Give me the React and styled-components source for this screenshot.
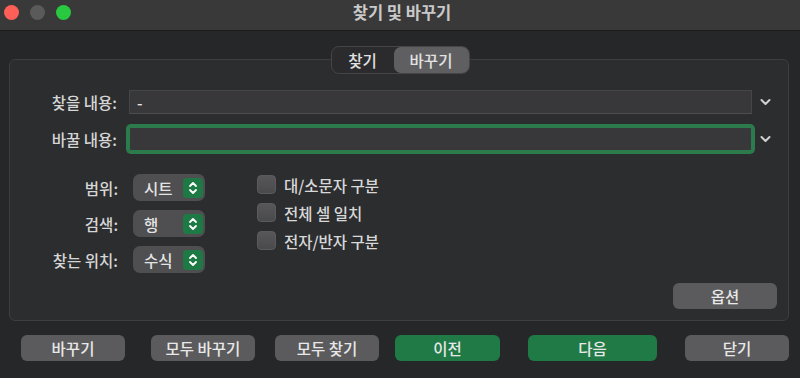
import React from "react";
import styled, { createGlobalStyle } from "styled-components";

const Global = createGlobalStyle`
  html, body { margin: 0; padding: 0; background: #262729; }
  body { font-family: "Noto Sans CJK KR", "Noto Sans", sans-serif; -webkit-font-smoothing: antialiased; }
  * { box-sizing: border-box; }
`;

const Window = styled.div`
  width: 800px;
  height: 378px;
  background: #262729;
  display: flex;
  flex-direction: column;
  overflow: hidden;
  color: #dcdcdc;
  font-size: 15.5px;
  font-weight: 500;
`;

const TitleBar = styled.div`
  height: 31px;
  flex: none;
  background: #393939;
  border-bottom: 1px solid #1b1b1b;
  display: grid;
  grid-template-columns: 1fr auto 1fr;
  align-items: center;
  padding: 0 0 0 4px;
`;

const Lights = styled.div`
  display: flex;
  gap: 11px;
  align-items: center;
  margin-top: -5px;
`;

const Light = styled.span`
  width: 15px;
  height: 15px;
  border-radius: 50%;
  background: ${(p) => p.$c};
`;

const Title = styled.div`
  font-size: 16.5px;
  font-weight: 700;
  color: #c9c9c9;
  margin-top: -6px;
`;

const Body = styled.div`
  flex: 1;
  display: flex;
  flex-direction: column;
  padding: 0 11px 0 9px;
`;

const TabsRow = styled.div`
  display: flex;
  justify-content: center;
  margin-top: 15px;
  position: relative;
  z-index: 1;
  padding-left: 2px;
`;

const Segmented = styled.div`
  display: flex;
  height: 28px;
  background: #2b2b2d;
  border: 1px solid #454547;
  border-radius: 8px;
`;

const Segment = styled.div`
  width: ${(p) => p.$w}px;
  display: flex;
  align-items: center;
  justify-content: center;
  border-radius: 7px;
  color: #e2e2e2;
  background: ${(p) => (p.$active ? "#5f5f61" : "transparent")};
  padding-bottom: 1px;
`;

const Panel = styled.div`
  margin-top: -15px;
  height: 262px;
  background: #2c2d2f;
  border: 1px solid #3d3e40;
  border-radius: 6px;
  display: flex;
  flex-direction: column;
  padding: 30px 11px 11px 0;
`;

const FieldGrid = styled.div`
  display: grid;
  grid-template-columns: 119px 623px 28px;
  row-gap: 13px;
  align-items: center;
`;

const Label = styled.div`
  text-align: right;
  padding-right: 12px;
  color: #d6d6d6;
  white-space: nowrap;
  line-height: 24px;
`;

const Input = styled.div`
  height: 24px;
  background: #38383a;
  border: 1px solid #454547;
  border-bottom-color: #4e4e50;
  display: flex;
  align-items: center;
  padding-left: 7px;
  color: #e6e6e6;
  ${(p) =>
    p.$focus &&
    `
    border: 1px solid #2c7b4c;
    box-shadow: 0 0 0 3px #2c7b4c;
    border-radius: 2px;
  `}
`;

const Chevron = styled.div`
  display: flex;
  padding-left: 8px;
`;

const OptionsArea = styled.div`
  display: flex;
  margin-top: 23px;
  align-items: flex-start;
`;

const PopupGrid = styled.div`
  display: grid;
  grid-template-columns: 108px 72px;
  column-gap: 15px;
  row-gap: 9px;
  align-items: center;
`;

const OptLabel = styled.div`
  text-align: right;
  color: #d6d6d6;
  white-space: nowrap;
`;

const Popup = styled.div`
  height: 27px;
  background: #4f4f51;
  border-radius: 7px;
  display: flex;
  align-items: center;
  justify-content: space-between;
  padding: 0 2px 0 11px;
  color: #e4e4e4;
`;

const Stepper = styled.div`
  width: 20px;
  height: 20px;
  border-radius: 4px;
  background: #1e7a45;
  display: flex;
  align-items: center;
  justify-content: center;
`;

const CheckList = styled.div`
  display: flex;
  flex-direction: column;
  gap: 9px;
  margin-left: 52px;
  margin-top: 1px;
`;

const CheckRow = styled.div`
  display: flex;
  align-items: center;
  gap: 8px;
  height: 19px;
  color: #d8d8d8;
`;

const Box = styled.span`
  width: 19px;
  height: 19px;
  border-radius: 4px;
  background: linear-gradient(#575759, #4a4a4c);
  border: 1px solid #5b5b5d;
`;

const OptionRow = styled.div`
  display: flex;
  justify-content: flex-end;
  margin-top: 10px;
`;

const Button = styled.div`
  width: ${(p) => p.$w || 104}px;
  margin-left: ${(p) => p.$ml || 0}px;
  height: 26px;
  border-radius: 6px;
  background: ${(p) => (p.$primary ? "#1f7a46" : "#5b5b5d")};
  color: #e8e8e8;
  display: flex;
  align-items: center;
  justify-content: center;
  flex: none;
  padding-bottom: 1px;
`;

const ButtonBar = styled.div`
  display: flex;
  margin-top: 14px;
  padding-left: 12px;
`;

const ChevronDown = () => (
  <svg width="11" height="8" viewBox="0 0 11 8">
    <path d="M1.5 2 L5.5 6 L9.5 2" fill="none" stroke="#d0d0d0" strokeWidth="2" strokeLinecap="round" strokeLinejoin="round" />
  </svg>
);

const UpDown = () => (
  <svg width="10" height="14" viewBox="0 0 10 14">
    <path d="M2 5 L5 2 L8 5 M2 9 L5 12 L8 9" fill="none" stroke="#ffffff" strokeWidth="1.8" strokeLinecap="round" strokeLinejoin="round" />
  </svg>
);

export default function App() {
  return (
    <>
      <Global />
      <Window>
        <TitleBar>
          <Lights>
            <Light $c="#ff5f57" />
            <Light $c="#5a5a5b" />
            <Light $c="#28c840" />
          </Lights>
          <Title>찾기 및 바꾸기</Title>
          <div />
        </TitleBar>
        <Body>
          <TabsRow>
            <Segmented>
              <Segment $w={62}>찾기</Segment>
              <Segment $w={75} $active>바꾸기</Segment>
            </Segmented>
          </TabsRow>
          <Panel>
            <FieldGrid>
              <Label>찾을 내용:</Label>
              <Input>-</Input>
              <Chevron><ChevronDown /></Chevron>
              <Label>바꿀 내용:</Label>
              <Input $focus />
              <Chevron><ChevronDown /></Chevron>
            </FieldGrid>
            <OptionsArea>
              <PopupGrid>
                <OptLabel>범위:</OptLabel>
                <Popup>시트<Stepper><UpDown /></Stepper></Popup>
                <OptLabel>검색:</OptLabel>
                <Popup>행<Stepper><UpDown /></Stepper></Popup>
                <OptLabel>찾는 위치:</OptLabel>
                <Popup>수식<Stepper><UpDown /></Stepper></Popup>
              </PopupGrid>
              <CheckList>
                <CheckRow><Box />대/소문자 구분</CheckRow>
                <CheckRow><Box />전체 셀 일치</CheckRow>
                <CheckRow><Box />전자/반자 구분</CheckRow>
              </CheckList>
            </OptionsArea>
            <OptionRow>
              <Button $w={104}>옵션</Button>
            </OptionRow>
          </Panel>
          <ButtonBar>
            <Button $w={104}>바꾸기</Button>
            <Button $w={104} $ml={26}>모두 바꾸기</Button>
            <Button $w={104} $ml={20}>모두 찾기</Button>
            <Button $w={105} $ml={16} $primary>이전</Button>
            <Button $w={129} $ml={28} $primary>다음</Button>
            <Button $w={104} $ml={28}>닫기</Button>
          </ButtonBar>
        </Body>
      </Window>
    </>
  );
}
